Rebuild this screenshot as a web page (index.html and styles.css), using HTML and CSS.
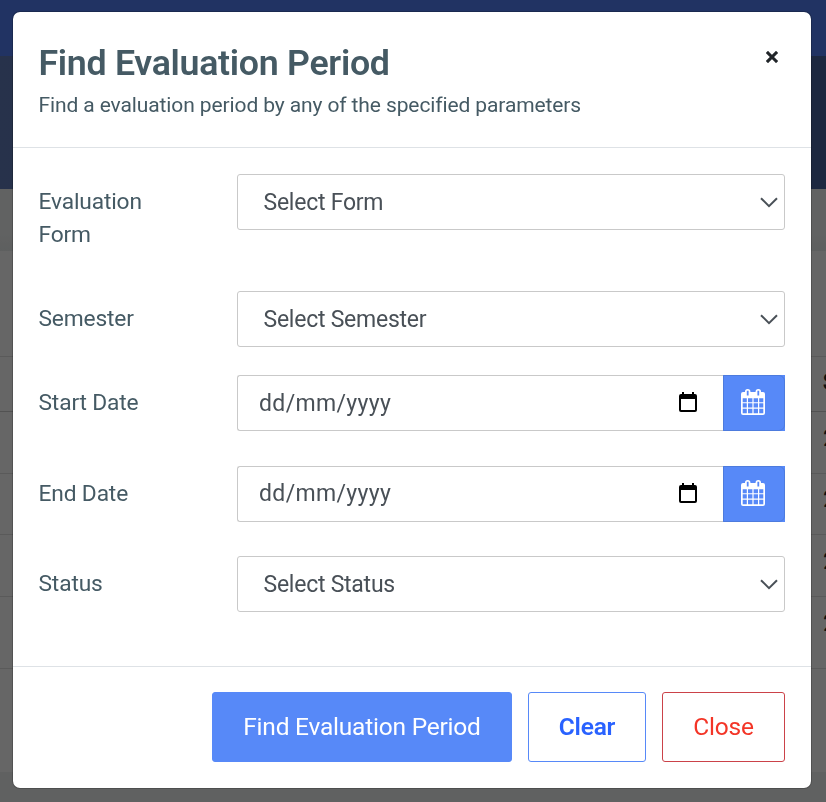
FILE: index.html
```html
<!DOCTYPE html>
<html lang="en">
  <head>
    <meta charset="UTF-8" />
    <meta name="viewport" content="width=device-width, initial-scale=1.0" />
    <title>Evaluation Periods</title>
    <link rel="stylesheet" href="styles.css">
  </head>
  <body>
    <div class="page">
      <div class="topbar"></div>
      <div class="hero"></div>
      <div class="toolbar"></div>
      <div class="table">
        <div class="row row-filter"></div>
        <div class="row row-head">S</div>
        <div class="row">2</div>
        <div class="row">2</div>
        <div class="row">2</div>
        <div class="row row-last">2</div>
      </div>
    </div>

    <div class="backdrop">
      <form class="modal" role="dialog" aria-labelledby="modalTitle">
        <div class="modal-header">
          <div>
            <h1 id="modalTitle">Find Evaluation Period</h1>
            <p>Find a evaluation period by any of the specified parameters</p>
          </div>
          <button type="button" class="close-icon" aria-label="Close">
            <svg viewBox="0 0 12 12" width="12" height="12">
              <path d="M2 2L10 10M10 2L2 10" fill="none" stroke="#212529" stroke-width="3.1" stroke-linecap="square" />
            </svg>
          </button>
        </div>

        <div class="modal-body">
          <div class="field field-tall">
            <label>Evaluation Form</label>
            <div class="select">
              <span>Select Form</span>
              <svg class="chevron" viewBox="0 0 18 11" width="18" height="11"><path d="M1 1.2L9 9.2L17 1.2" /></svg>
            </div>
          </div>
          <div class="field field-semester">
            <label>Semester</label>
            <div class="select">
              <span>Select Semester</span>
              <svg class="chevron" viewBox="0 0 18 11" width="18" height="11"><path d="M1 1.2L9 9.2L17 1.2" /></svg>
            </div>
          </div>
          <div class="field field-start">
            <label>Start Date</label>
            <div class="date">
              <div class="date-input">
                <span>dd/mm/yyyy</span>
                <svg class="picker" viewBox="0 0 18 20" width="18" height="20"><path fill-rule="evenodd" d="M2 2H3V0H5V2H13V0H15V2H16Q18 2 18 4V18Q18 20 16 20H2Q0 20 0 18V4Q0 2 2 2ZM2 7V18H16V7Z" /></svg>
              </div>
              <div class="date-addon">
                <div class="addon-inner">
                  <svg class="calendar" viewBox="0 0 24 26" width="24" height="26">
                    <path fill-rule="evenodd" d="M2 3H22Q24 3 24 5V24Q24 26 22 26H2Q0 26 0 24V5Q0 3 2 3ZM1.7 9.3V13.2H5.8V9.3ZM7 9.3V13.2H11.4V9.3ZM12.6 9.3V13.2H17V9.3ZM18.2 9.3V13.2H22.3V9.3ZM1.7 14.3V18.6H5.8V14.3ZM7 14.3V18.6H11.4V14.3ZM12.6 14.3V18.6H17V14.3ZM18.2 14.3V18.6H22.3V14.3ZM1.7 19.7V24.3H5.8V19.7ZM7 19.7V24.3H11.4V19.7ZM12.6 19.7V24.3H17V19.7ZM18.2 19.7V24.3H22.3V19.7Z" />
                    <rect x="4" y="0" width="5.4" height="7.6" rx="2.6" />
                    <rect x="14.6" y="0" width="5.4" height="7.6" rx="2.6" />
                    <path class="ring" d="M6.7 1.8V6.4M17.3 1.8V6.4" />
                  </svg>
                </div>
              </div>
            </div>
          </div>
          <div class="field field-end">
            <label>End Date</label>
            <div class="date">
              <div class="date-input">
                <span>dd/mm/yyyy</span>
                <svg class="picker" viewBox="0 0 18 20" width="18" height="20"><path fill-rule="evenodd" d="M2 2H3V0H5V2H13V0H15V2H16Q18 2 18 4V18Q18 20 16 20H2Q0 20 0 18V4Q0 2 2 2ZM2 7V18H16V7Z" /></svg>
              </div>
              <div class="date-addon">
                <div class="addon-inner">
                  <svg class="calendar" viewBox="0 0 24 26" width="24" height="26">
                    <path fill-rule="evenodd" d="M2 3H22Q24 3 24 5V24Q24 26 22 26H2Q0 26 0 24V5Q0 3 2 3ZM1.7 9.3V13.2H5.8V9.3ZM7 9.3V13.2H11.4V9.3ZM12.6 9.3V13.2H17V9.3ZM18.2 9.3V13.2H22.3V9.3ZM1.7 14.3V18.6H5.8V14.3ZM7 14.3V18.6H11.4V14.3ZM12.6 14.3V18.6H17V14.3ZM18.2 14.3V18.6H22.3V14.3ZM1.7 19.7V24.3H5.8V19.7ZM7 19.7V24.3H11.4V19.7ZM12.6 19.7V24.3H17V19.7ZM18.2 19.7V24.3H22.3V19.7Z" />
                    <rect x="4" y="0" width="5.4" height="7.6" rx="2.6" />
                    <rect x="14.6" y="0" width="5.4" height="7.6" rx="2.6" />
                    <path class="ring" d="M6.7 1.8V6.4M17.3 1.8V6.4" />
                  </svg>
                </div>
              </div>
            </div>
          </div>
          <div class="field">
            <label>Status</label>
            <div class="select">
              <span>Select Status</span>
              <svg class="chevron" viewBox="0 0 18 11" width="18" height="11"><path d="M1 1.2L9 9.2L17 1.2" /></svg>
            </div>
          </div>
        </div>

        <div class="modal-footer">
          <button type="button" class="btn btn-primary">Find Evaluation Period</button>
          <button type="button" class="btn btn-clear">Clear</button>
          <button type="button" class="btn btn-close">Close</button>
        </div>
      </form>
    </div>
  </body>
</html>
```
FILE: styles.css
```css
* {
  box-sizing: border-box;
}

body {
  font-family: Roboto, sans-serif;
  margin: 0;
  height: 100vh;
  overflow: hidden;
  background: #f0f3f3;
  color: #455a64;
}

.topbar {
  height: 56px;
  background: #5380f8;
}

.hero {
  height: 133px;
  background: linear-gradient(90deg, #627dbc, #4964a0);
}

.toolbar {
  height: 62px;
  background: linear-gradient(#f3f5f5 70%, #eaeeee);
}

.table {
  height: 521px;
  background: #fff;
}

.row {
  display: flex;
  align-items: center;
  justify-content: flex-end;
  height: 61.5px;
  margin-right: -10px;
  padding-bottom: 8px;
  border-bottom: 1px solid #e0e0e0;
  color: #212529;
  font-size: 23px;
}

.row-filter {
  height: 106px;
}

.row-head {
  height: 55px;
  margin-right: -11px;
  padding-bottom: 4px;
  font-weight: 700;
  border-color: #ccc;
}

.row-last {
  height: 72px;
  padding-bottom: 18px;
}

.backdrop {
  position: fixed;
  inset: 0;
  padding: 11px 14px 13px 12px;
  background: rgba(0, 0, 0, 0.6);
}

.modal {
  display: flex;
  flex-direction: column;
  height: 778px;
  background: #fff;
  background-clip: padding-box;
  border: 1px solid rgba(0, 0, 0, 0.2);
  border-radius: 8px;
}

.modal-header {
  display: flex;
  justify-content: space-between;
  height: 136px;
  padding: 28px 33px 0 25.5px;
  border-bottom: 1px solid #dee2e6;
}

h1 {
  margin: 0;
  font-size: 35.75px;
  line-height: 47px;
  font-weight: 600;
  letter-spacing: -0.3px;
}

p {
  margin: 3px 0 0;
  font-size: 21px;
  line-height: 30px;
  letter-spacing: -0.11px;
}

.close-icon {
  width: 12px;
  height: 12px;
  margin-top: 10.5px;
  padding: 0;
  border: none;
  background: none;
}

.close-icon svg {
  display: block;
}

.modal-body {
  flex: 1;
  padding: 26px 26px 0 25.5px;
}

.field {
  display: flex;
  justify-content: space-between;
  height: 56px;
}

.field-tall {
  height: 117px;
}

.field-semester {
  height: 84px;
}

.field-start {
  height: 91px;
}

.field-end {
  height: 90px;
}

label {
  width: 140px;
  padding-top: 11px;
  font-size: 22.75px;
  line-height: 33px;
  letter-spacing: -0.15px;
}

.select,
.date {
  display: flex;
  align-items: center;
  width: 548px;
  height: 56px;
  color: #495057;
  font-size: 23px;
}

.select {
  justify-content: space-between;
  padding: 0 6px 0 25.5px;
  border: 1px solid #c9c9c9;
  border-radius: 3px;
  letter-spacing: -0.25px;
}

.chevron path {
  fill: none;
  stroke: #495057;
  stroke-width: 2;
}

.date-input {
  display: flex;
  flex: 1;
  align-items: center;
  justify-content: space-between;
  height: 56px;
  padding: 0 26px 0 21px;
  border: 1px solid #c9c9c9;
  border-right: none;
  border-radius: 3px 0 0 3px;
}

.field-end .date-input {
  padding-bottom: 1px;
}

.date-input span {
  letter-spacing: 0.35px;
}

.picker {
  margin-bottom: 2px;
}

.date-addon {
  width: 62px;
  height: 56px;
  background: #5789f8;
}

.addon-inner {
  display: flex;
  align-items: center;
  justify-content: center;
  height: 56px;
  padding: 0 2px 2px 0;
  border: 1px solid #4d7bdd;
  border-radius: 0 6px 6px 0;
}

.calendar {
  fill: #fff;
}

.calendar .ring {
  stroke: #5789f8;
  stroke-width: 1.8;
}

.modal-footer {
  display: flex;
  justify-content: flex-end;
  gap: 16px;
  height: 122px;
  padding: 25px 26px 0;
  border-top: 1px solid #dee2e6;
}

.btn {
  height: 70px;
  padding: 0 0 2px;
  background: #fff;
  border: 1px solid #5789f8;
  border-radius: 3px;
  font-family: inherit;
  font-size: 24.5px;
  letter-spacing: -0.22px;
}

.btn-primary {
  width: 300px;
  background: #5789f8;
  color: #fff;
}

.btn-clear {
  width: 118px;
  color: #2962ff;
  font-weight: 600;
}

.btn-close {
  width: 123px;
  border-color: #cb4249;
  color: #f33527;
}
```
